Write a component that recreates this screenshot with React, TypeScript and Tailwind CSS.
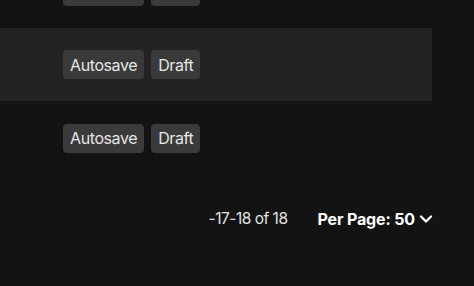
import React from "react";
import { ChevronDown } from "lucide-react";

const Badges = () => (
  <div className="flex items-center gap-[7px]">
    <span className="h-[29px] px-[7px] flex items-center rounded-[4px] bg-[#3a3a3a] text-[#e6e6e6] text-[16px] leading-none tracking-[-0.4px]">
      Autosave
    </span>
    <span className="h-[29px] px-[7px] flex items-center rounded-[4px] bg-[#3a3a3a] text-[#e6e6e6] text-[16px] leading-none tracking-[-0.4px]">
      Draft
    </span>
  </div>
);

export default function App() {
  return (
    <div
      className="w-[474px] h-[286px] bg-[#131313] overflow-hidden"
      style={{ fontFamily: "Inter, 'Liberation Sans', sans-serif" }}
    >
      <div className="w-[432px] mt-[-46px] flex flex-col">
        <div className="h-[74px] pl-[63px] flex items-center">
          <Badges />
        </div>
        <div className="h-[73px] pl-[63px] flex items-center bg-[#232323]">
          <Badges />
        </div>
        <div className="h-[74px] pl-[63px] flex items-center">
          <Badges />
        </div>
      </div>
      <div className="mt-[32px] w-[436px] flex items-center justify-end h-[24px]">
        <span className="text-[15.5px] text-[#e2e2e2] tracking-[-0.5px]">-17-18 of 18</span>
        <span className="ml-[30px] text-[16px] font-bold text-white tracking-[-0.15px]">Per Page: 50</span>
        <ChevronDown className="ml-[1px] text-white" size={20} strokeWidth={2.8} />
      </div>
    </div>
  );
}
